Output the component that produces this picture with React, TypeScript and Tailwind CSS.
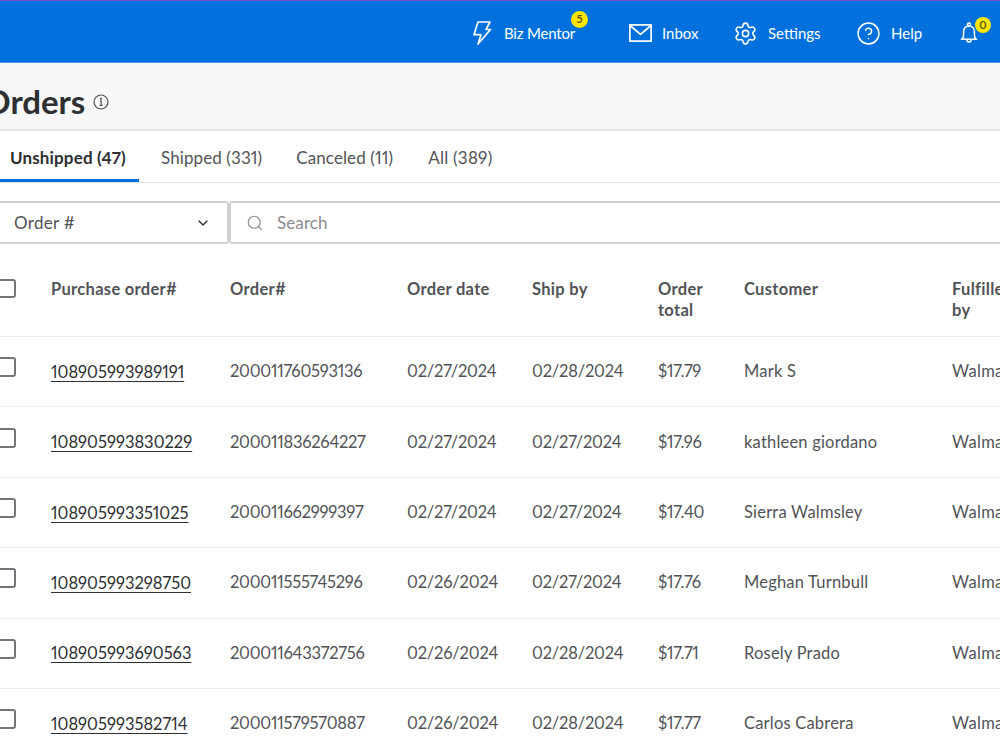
import { ChevronDown, CircleHelp, Search, Settings } from "lucide-react";

const orders = [
    ["108905993989191", "200011760593136", "02/27/2024", "02/28/2024", "$17.79", "Mark S"],
    ["108905993830229", "200011836264227", "02/27/2024", "02/27/2024", "$17.96", "kathleen giordano"],
    ["108905993351025", "200011662999397", "02/27/2024", "02/27/2024", "$17.40", "Sierra Walmsley"],
    ["108905993298750", "200011555745296", "02/26/2024", "02/27/2024", "$17.76", "Meghan Turnbull"],
    ["108905993690563", "200011643372756", "02/26/2024", "02/28/2024", "$17.71", "Rosely Prado"],
    ["108905993582714", "200011579570887", "02/26/2024", "02/28/2024", "$17.77", "Carlos Cabrera"],
];

const columns = "grid grid-cols-[51px_179px_177px_125px_126px_86px_208px_200px]";

export default function App() {
    return (
        <div className="w-[1000px] h-[750px] overflow-hidden bg-white text-[#515357] font-['Lato','Liberation_Sans',sans-serif] proportional-nums">
            <div className="h-[63px] bg-[#0071dc] border-t border-[#7b4fc4] border-b border-b-[#4c9be8] flex items-center pl-[471px] text-white text-[15px] pt-[3px]">
                <div className="relative flex items-center w-[158px]">
                    <svg viewBox="0 0 20 26" className="w-[20px] h-[26px] ml-[1px]" fill="none" stroke="currentColor" strokeWidth="1.7" strokeLinejoin="round">
                        <path d="M6 2 H18 L14 9.5 H18.5 L6 24 L9 14.7 H2 Z" />
                    </svg>
                    <span className="ml-[12px] tracking-[-0.2px]">Biz Mentor</span>
                    <span className="absolute left-[100px] -top-[9px] w-[17px] h-[17px] rounded-full bg-[#ffe600] text-[#5c5a10] text-[11px] font-bold flex items-center justify-center">5</span>
                </div>
                <div className="flex items-center w-[106px]">
                    <svg viewBox="0 0 23 18" className="w-[23px] h-[18px] -mt-[1px]" fill="none" stroke="currentColor" strokeWidth="1.7">
                        <rect x="0.9" y="0.9" width="21.2" height="16.2" />
                        <path d="M1 1.5 L11.5 10.5 L22 1.5" />
                    </svg>
                    <span className="ml-[10px]">Inbox</span>
                </div>
                <div className="flex items-center w-[123px]">
                    <Settings className="w-[25px] h-[25px] -ml-[2px]" strokeWidth={1.5} />
                    <span className="ml-[10px]">Settings</span>
                </div>
                <div className="flex items-center w-[102px]">
                    <CircleHelp className="w-[25px] h-[25px] -ml-[2px]" strokeWidth={1.4} />
                    <span className="ml-[10px]">Help</span>
                </div>
                <div className="relative">
                    <svg viewBox="0 0 18 22" className="w-[18px] h-[22px]" fill="none" stroke="currentColor" strokeWidth="1.5" strokeLinejoin="round">
                        <circle cx="9" cy="2.4" r="1.5" />
                        <path d="M2.5 17 C4 15 3.6 12 3.6 9.5 C3.6 6.3 6 3.9 9 3.9 C12 3.9 14.4 6.3 14.4 9.5 C14.4 12 14 15 15.5 17" />
                        <path d="M0.8 17.2 H17.2" />
                        <path d="M6.8 17.2 C6.8 21 11.2 21 11.2 17.2" />
                    </svg>
                    <span className="absolute left-[15px] -top-[5px] w-[16px] h-[16px] rounded-full bg-[#ffe600] text-[#5c5a10] text-[11px] font-bold flex items-center justify-center">0</span>
                </div>
            </div>

            <div className="h-[68px] bg-[#f8f8f8] border-b-2 border-[#e6e6e6] flex items-center -ml-[16px] pt-[10px]">
                <h1 className="text-[33px] font-bold text-[#2e2f32] leading-none">Orders</h1>
                <svg viewBox="0 0 16 16" className="w-[16px] h-[16px] ml-[8px] mt-[1px] text-[#515357]" fill="none" stroke="currentColor" strokeWidth="1.2">
                    <circle cx="8" cy="8" r="7" />
                    <circle cx="8" cy="4.8" r="0.5" fill="currentColor" />
                    <path d="M6.8 7.2 H8.2 V11.4 M6.6 11.4 H9.6" />
                </svg>
            </div>

            <div className="h-[52px] border-b border-[#e3e4e5] flex items-stretch text-[17px] pt-[2px] tracking-[0.1px]">
                <div className="w-[139px] pl-[10px] flex items-center font-bold border-b-[3px] border-[#0071dc] pt-[3px] text-[#2e2f32] tracking-[0.15px]">Unshipped (47)</div>
                <div className="ml-[22px] flex items-center">Shipped (331)</div>
                <div className="ml-[34px] flex items-center">Canceled (11)</div>
                <div className="ml-[35px] flex items-center tracking-[0.25px]">All (389)</div>
            </div>

            <div className="mt-[18px] h-[43px] flex text-[17px]">
                <div className="w-[229px] border-2 border-l-0 border-[#d0d1d3] rounded-r-[3px] flex items-center justify-between pl-[14px] pr-[16px]">
                    <span className="tracking-[0.3px]">Order #</span>
                    <ChevronDown className="w-[16px] h-[16px] text-[#2e2f32]" strokeWidth={2} />
                </div>
                <div className="flex-1 border-2 border-r-0 border-[#d0d1d3] rounded-l-[3px] flex items-center pl-[15px] text-[#8b8c8f]">
                    <Search className="w-[18px] h-[18px]" strokeWidth={1.5} />
                    <span className="ml-[13px] tracking-[0.1px]">Search</span>
                </div>
            </div>

            <div className={`${columns} h-[93px] pt-[35px] border-b border-[#eeeeef] text-[16.5px] font-bold leading-[21px] tracking-[0.3px]`}>
                <div><div className="w-[20px] h-[19px] -ml-[4px] rounded-[3px] border-2 border-[#74767c] bg-white" /></div>
                <div>Purchase order#</div>
                <div>Order#</div>
                <div>Order date</div>
                <div>Ship by</div>
                <div>Order<br />total</div>
                <div>Customer</div>
                <div>Fulfilled<br />by</div>
            </div>

            {orders.map((o) => (
                <div key={o[0]} className={`${columns} h-[70.4px] items-center border-b border-[#eeeeef] text-[16.5px]`}>
                    <div className="-mt-[9px]"><div className="w-[20px] h-[20px] -ml-[4px] rounded-[3px] border-2 border-[#74767c] bg-white" /></div>
                    <a className="text-[#2e2f32] underline underline-offset-[3px] pt-[1px]">{o[0]}</a>
                    <div className="tracking-[-0.25px]">{o[1]}</div>
                    <div className="tracking-[-0.2px]">{o[2]}</div>
                    <div className="tracking-[-0.2px]">{o[3]}</div>
                    <div className="tracking-[-0.3px]">{o[4]}</div>
                    <div className="tracking-[0.2px]">{o[5]}</div>
                    <div className="tracking-[0.3px]">Walmart</div>
                </div>
            ))}
        </div>
    );
}
